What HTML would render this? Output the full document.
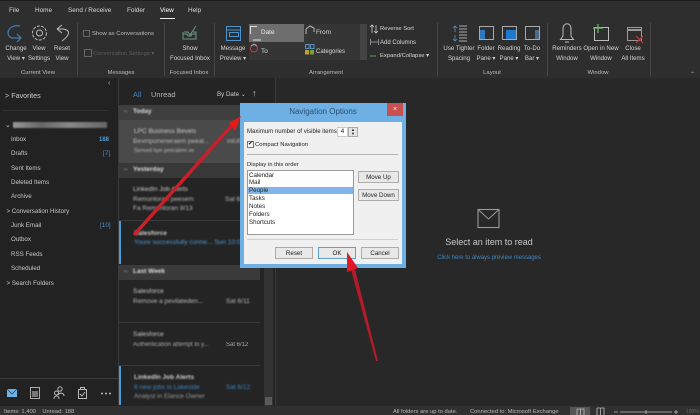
<!DOCTYPE html>
<html><head><meta charset="utf-8">
<style>
html,body{margin:0;padding:0;background:#282828}
#p{position:relative;width:700px;height:415px;overflow:hidden;background:#282828;font-family:"Liberation Sans",sans-serif;color:#d8d8d8;filter:blur(.3px)}
#p div{position:absolute}
.t{white-space:nowrap;font-size:6.4px;line-height:8px}
.c{text-align:center;transform:translateX(-50%)}
.m{font-size:6.1px;line-height:10px;white-space:nowrap;text-align:center;transform:translateX(-50%);color:#d4d4d4}
.g{font-size:5.9px;color:#bdbdbd;white-space:nowrap;transform:translateX(-50%);line-height:8px}
.s{background:#454545;width:1px;top:23px;height:53px}
.n{font-size:6.2px;line-height:8px;color:#c8c8c8;white-space:nowrap;left:11px}
.b{filter:blur(.9px);white-space:nowrap;font-size:6.5px;line-height:8px;color:#bbb}
.db{background:#e8e8e8;border:1px solid #adadad;box-sizing:border-box;text-align:center;color:#222;font-size:6.2px;line-height:11px}
</style></head><body><div id="p">
<div style="left:0;top:0;width:700px;height:1px;background:#1c1c1c"></div>
<div style="left:0;top:1px;width:700px;height:77px;background:#2e2e2e"></div>
<div style="left:0;top:78px;width:118px;height:328px;background:#222"></div>
<div style="left:118px;top:78px;width:157px;height:328px;background:#242424"></div>
<div style="left:0;top:406px;width:700px;height:9px;background:#303030"></div>

<div class="t" style="left:9px;top:7px">File</div>
<div class="t" style="left:35px;top:7px">Home</div>
<div class="t" style="left:68px;top:7px">Send / Receive</div>
<div class="t" style="left:127px;top:7px">Folder</div>
<div class="t" style="left:160px;top:7px;color:#fff">View</div>
<div style="left:160px;top:18px;width:15px;height:1px;background:#eee"></div>
<div class="t" style="left:188px;top:7px">Help</div>

<div style="left:249px;top:24px;width:55px;height:18px;background:#6e6e6e"></div>
<div style="left:249px;top:42px;width:111px;height:18px;background:#353535"></div>
<div style="left:304px;top:24px;width:56px;height:18px;background:#353535"></div>
<div style="left:360px;top:24px;width:7px;height:36px;background:#444"></div>

<svg style="position:absolute;left:0;top:20px" width="700" height="40" fill="none">
<path d="M21 6 C8 4 6 16 13 18 L21 18 M18 14 L22 18 L18 22" stroke="#3f7fb5" stroke-width="1.2" transform="translate(-1,0)"/>
<circle cx="39.500" cy="13" r="3" stroke="#bbb"/><circle cx="39.500" cy="13" r="7" stroke="#bbb" stroke-dasharray="3 1.300"/>
<path d="M57 9 L62 5 M57 9 L62 13 M57 9 L63 9 C71 10 70 15 62 21" stroke="#bbb"/>
<rect x="83.500" y="10.500" width="6" height="6" stroke="#666"/>
<path d="M184 12 L188 12 L190 15 L196 6 M193 12 L196 12 L196 19 L183 19 L183 12 M183 14 L187 14 L188 16 L191 16 L192 14 L196 14" stroke="#6a9a80"/>
<rect x="226.500" y="6.500" width="14" height="14" stroke="#4b93c8"/><rect x="229.500" y="12.500" width="9" height="4" stroke="#4b93c8"/><path d="M227 10H240" stroke="#4b93c8"/>
<path d="M250.500 14V6.500H257M253 20H261" stroke="#e0e0e0"/><circle cx="254" cy="28.500" r="3.500" stroke="#c04040"/><path d="M251 26L254 24L257 26" stroke="#aaa"/>
<path d="M306 9 L310 6 L314 8 V12 M306 9 V14" stroke="#bbb"/><rect x="305.500" y="24.500" width="3.500" height="4" stroke="#5a8fc0"/><rect x="310.500" y="24.500" width="3.500" height="4" stroke="#5a8fc0"/><rect x="305" y="30" width="4" height="4.500" fill="#c0a030"/><rect x="310" y="30" width="4" height="4.500" fill="#7aa030"/>
<path d="M372 5V13M370 7L372 5L374 7M376 5V13M374 11L376 13L378 11" stroke="#ccc" stroke-width=".8"/>
<path d="M370.500 19V25M378.500 19V25M371 22H378" stroke="#889"/>
<path d="M370 36H376" stroke="#5aa05a"/>
<path d="M455 6V12M453 8L455 6L457 8M455 15V21M453 19L455 21L457 19" stroke="#4b93c8" stroke-width=".8"/>
<path d="M459 6H467M459 9H467M459 12H467M459 15H467M459 18H467M459 21H467" stroke="#aaa"/>
<rect x="479.500" y="6.500" width="14" height="13" stroke="#aaa"/><rect x="480" y="10" width="5" height="9" fill="#2e78c0"/>
<rect x="502.500" y="6.500" width="14" height="13" stroke="#aaa"/><rect x="506" y="10" width="10" height="9" fill="#1e78d0"/>
<rect x="525.500" y="6.500" width="14" height="13" stroke="#aaa"/><rect x="535" y="10" width="4" height="9" fill="#4a6a8a"/>
<path d="M560.500 19.500 H573.500 L571 16 V9 C571 2 563 2 563 9 V16 Z M565 22 H569" stroke="#bbb"/>
<rect x="594.500" y="7.500" width="14" height="13" stroke="#bbb"/><path d="M598 4V13M593 8H603" stroke="#6abf6a" stroke-width="1.2"/>
<rect x="627.500" y="7.500" width="14" height="13" stroke="#999"/><path d="M628 10H641" stroke="#999" stroke-width="2"/><path d="M636 16L643 23M643 16L636 23" stroke="#b04040" stroke-width="1.2"/>
</svg>

<div class="m" style="left:16px;top:44px">Change<br>View ▾</div>
<div class="m" style="left:39px;top:44px">View<br>Settings</div>
<div class="m" style="left:62px;top:44px">Reset<br>View</div>
<div class="g" style="left:38px;top:69px">Current View</div>
<div class="s" style="left:77px"></div>
<div class="t" style="left:92px;top:30px;color:#bbb;font-size:5.9px">Show as Conversations</div>
<div class="t" style="left:93px;top:50px;color:#5c5c5c;font-size:5.800px">Conversation Settings ▾</div>
<div style="left:84px;top:49px;width:6px;height:6px;border:1px solid #666"></div>
<div class="g" style="left:121px;top:69px">Messages</div>
<div class="s" style="left:164px"></div>
<div class="m" style="left:190px;top:44px">Show<br>Focused Inbox</div>
<div class="g" style="left:189px;top:69px">Focused Inbox</div>
<div class="s" style="left:214px"></div>
<div class="m" style="left:233px;top:44px">Message<br>Preview ▾</div>
<div class="t" style="left:261px;top:29px;color:#eee">Date</div>
<div class="t" style="left:261px;top:48px">To</div>
<div class="t" style="left:316px;top:29px">From</div>
<div class="t" style="left:316px;top:48px;font-size:6px">Categories</div>
<div class="t" style="left:380px;top:25px;font-size:5.800px">Reverse Sort</div>
<div class="t" style="left:380px;top:39px;font-size:6px">Add Columns</div>
<div class="t" style="left:380px;top:52px;font-size:5.900px">Expand/Collapse ▾</div>
<div class="g" style="left:326px;top:69px">Arrangement</div>
<div class="s" style="left:437px"></div>
<div class="m" style="left:459px;top:44px">Use Tighter<br>Spacing</div>
<div class="m" style="left:486px;top:44px">Folder<br>Pane ▾</div>
<div class="m" style="left:509px;top:44px">Reading<br>Pane ▾</div>
<div class="m" style="left:532px;top:44px">To-Do<br>Bar ▾</div>
<div class="g" style="left:492px;top:69px">Layout</div>
<div class="s" style="left:547px"></div>
<div class="m" style="left:567px;top:44px">Reminders<br>Window</div>
<div class="m" style="left:601px;top:44px">Open in New<br>Window</div>
<div class="m" style="left:633px;top:44px">Close<br>All Items</div>
<div class="g" style="left:598px;top:69px">Window</div>
<div class="s" style="left:650px"></div>
<div class="t" style="left:690px;top:71px;color:#aaa;font-size:6px">⌃</div>

<!-- nav -->
<div class="t" style="left:108px;top:80px;color:#bbb;font-size:7px">‹</div>
<div class="t" style="left:5px;top:92px;font-size:7.200px;color:#ccc">&gt; Favorites</div>
<div style="left:3px;top:110px;width:105px;height:1px;background:#333"></div>
<div class="n" style="left:5px;top:122px;font-size:7px">⌄</div>
<div class="b" style="left:13px;top:122px;width:94px;height:6px;background:linear-gradient(90deg,#999,#666 30%,#888 60%,#666);font-size:0"></div>
<div class="n" style="top:136px">Inbox</div><div class="t" style="left:99px;top:136px;color:#4f9bd8;font-weight:bold;font-size:6px">188</div>
<div class="n" style="top:150px">Drafts</div><div class="t" style="left:103px;top:150px;color:#4f8fc8">[7]</div>
<div class="n" style="top:165px">Sent Items</div>
<div class="n" style="top:179px">Deleted Items</div>
<div class="n" style="top:193px">Archive</div>
<div class="n" style="top:208px;left:6.500px">&gt; Conversation History</div>
<div class="n" style="top:222px">Junk Email</div><div class="t" style="left:100px;top:222px;color:#4f8fc8">[10]</div>
<div class="n" style="top:236px">Outbox</div>
<div class="n" style="top:251px">RSS Feeds</div>
<div class="n" style="top:265px">Scheduled</div>
<div class="n" style="top:280px;left:6.500px">&gt; Search Folders</div>
<div style="left:0;top:378px;width:118px;height:1px;background:#3a3a3a"></div>
<svg style="position:absolute;left:0;top:384px" width="118" height="20" fill="none">
<rect x="7" y="5" width="10" height="8" fill="#6db3e6"/><path d="M7 5L12 10L17 5" stroke="#1f4f78" stroke-width=".8"/>
<rect x="30.500" y="3.500" width="9" height="11" stroke="#aaa"/><rect x="32" y="7" width="6" height="6" fill="#777"/>
<circle cx="60" cy="5" r="2.200" stroke="#bbb"/><circle cx="56.500" cy="9" r="2" stroke="#bbb"/><path d="M54 15C54 11 59 11 59 15M58 11C60 8 64 9 64 12" stroke="#bbb"/>
<rect x="78.500" y="5.500" width="8" height="9" stroke="#bbb"/><rect x="80.500" y="3.500" width="4" height="2" stroke="#bbb"/><path d="M80 10L82 12L85 8" stroke="#bbb"/>
<circle cx="102" cy="9.500" r="1" fill="#bbb"/><circle cx="106" cy="9.500" r="1" fill="#bbb"/><circle cx="110" cy="9.500" r="1" fill="#bbb"/>
</svg>
<div class="t" style="left:4px;top:409px;color:#bbb;font-size:5.800px;line-height:7px">Items: 1,400 &nbsp;&nbsp; Unread: 188</div>

<!-- list -->
<div style="left:118px;top:78px;width:1px;height:328px;background:#3a3a3a"></div>
<div style="left:275px;top:78px;width:1px;height:328px;background:#3a3a3a"></div>
<div style="left:264px;top:104px;width:9px;height:302px;background:#333"></div>
<div style="left:265px;top:397px;width:7px;height:8px;background:#5a5a5a"></div>
<div class="t" style="left:133px;top:91px;font-size:7.500px;color:#3f86c4">All</div>
<div class="t" style="left:151px;top:91px;font-size:7.500px;color:#b5b5b5">Unread</div>
<div class="t" style="left:217px;top:91px;font-size:6.200px;color:#ccc">By Date ⌄</div>
<div class="t" style="left:252px;top:89px;font-size:9px;color:#ccc">↑</div>
<div style="left:119px;top:105px;width:141px;height:58px;background:#4a4a4a"></div>
<div style="left:119px;top:105px;width:141px;height:15px;background:#3f3f3f"></div>
<div style="left:119px;top:163px;width:121px;height:15px;background:#383838"></div>
<div style="left:119px;top:265px;width:141px;height:15px;background:#3a3a3a"></div>
<div style="left:119px;top:221px;width:2px;height:43px;background:#4f9bd8"></div>
<div style="left:119px;top:366px;width:2px;height:39px;background:#4f9bd8"></div>
<div style="left:119px;top:220px;width:141px;height:1px;background:#3a3a3a"></div>
<div style="left:119px;top:322px;width:141px;height:1px;background:#3a3a3a"></div>
<div style="left:119px;top:365px;width:141px;height:1px;background:#3a3a3a"></div>
<div class="b" style="left:124px;top:108px;color:#bbb">–</div>
<div class="b" style="left:124px;top:166px;color:#bbb">–</div>
<div class="b" style="left:124px;top:268px;color:#bbb">–</div>
<div class="b" style="left:133px;top:108px;color:#ddd;font-weight:bold">Today</div>
<div class="b" style="left:134px;top:128px;color:#ccc">LPC Business Bevels</div>
<div class="b" style="left:133px;top:138px">Bevmponeneraem peeal...</div>
<div class="b" style="left:134px;top:147px;font-size:5.500px">Senveil bye peeralem ve</div>
<div class="b" style="left:227px;top:138px">iniU0</div>
<div class="b" style="left:133px;top:166px;color:#ddd;font-weight:bold">Yesterday</div>
<div class="b" style="left:133px;top:186px;color:#ccc">LinkedIn Job Alerts</div>
<div class="b" style="left:133px;top:196px">Remontoran peesem</div>
<div class="b" style="left:225px;top:196px">Sat 6/11</div>
<div class="b" style="left:133px;top:205px">Fa Remontoran 8/13</div>
<div class="b" style="left:134px;top:230px;color:#ccc;font-weight:bold">Salesforce</div>
<div class="b" style="left:134px;top:239px;color:#4f9bd8">Youre successfully conne... Sun 10:02</div>
<div class="b" style="left:133px;top:268px;color:#ddd;font-weight:bold">Last Week</div>
<div class="b" style="left:133px;top:288px;color:#ccc">Salesforce</div>
<div class="b" style="left:133px;top:298px">Remove a pevilateden...</div>
<div class="b" style="left:226px;top:298px">Sat 6/11</div>
<div class="b" style="left:133px;top:331px;color:#ccc">Salesforce</div>
<div class="t" style="left:133px;top:341px;color:#aaa;filter:blur(.4px);font-size:6px">Authentication attempt to y...</div>
<div class="t" style="left:226px;top:341px;color:#aaa;filter:blur(.3px);font-size:6px">Sat 6/12</div>
<div class="b" style="left:134px;top:374px;color:#ccc;font-weight:bold">LinkedIn Job Alerts</div>
<div class="b" style="left:134px;top:384px;color:#3f86c4">8 new jobs in Lakeside</div>
<div class="b" style="left:226px;top:384px;color:#3f86c4">Sat 6/12</div>
<div class="b" style="left:134px;top:393px;color:#999">Analyst in Elance Owner</div>

<!-- reading -->
<svg style="position:absolute;left:477px;top:208px" width="24" height="21" fill="none"><rect x="1" y="1.500" width="21" height="18" stroke="#999" stroke-width="1.100"/><path d="M1 1.500L11.500 11L22 1.500" stroke="#999"/></svg>
<div class="t c" style="left:489px;top:236px;font-size:9px;line-height:12px;color:#c8c8c8">Select an item to read</div>
<div class="t c" style="left:489px;top:254px;font-size:5.950px;color:#3f86c4">Click here to always preview messages</div>

<!-- status -->
<div class="t" style="left:393px;top:409px;color:#bbb;font-size:5.800px;line-height:7px">All folders are up to date.</div>
<div class="t" style="left:470px;top:409px;color:#bbb;font-size:5.800px;line-height:7px">Connected to: Microsoft Exchange</div>
<div style="left:570px;top:407px;width:20px;height:8px;background:#555"></div>
<svg style="position:absolute;left:570px;top:407px" width="130" height="8" fill="none"><path d="M7 2H14V8M7 2V8M10.500 2V8M27 1H34V8M27 1V8M30.500 1V8" stroke="#bbb" stroke-width=".8"/><path d="M44 5H48M50 5H102M76 3V7M104 5H108M106 3V7" stroke="#bbb" stroke-width=".8"/></svg>
<div class="t" style="left:686px;top:409px;color:#666;font-size:5px;line-height:7px">100%</div>

<!-- dialog -->
<div style="left:240px;top:103px;width:166px;height:165px;background:#6fb0e4"></div>
<div style="left:244px;top:122px;width:158px;height:142px;background:#f0f0f0"></div>
<div class="t c" style="left:323px;top:107px;font-size:8px;line-height:10px;color:#2a4f74">Navigation Options</div>
<div style="left:387px;top:103px;width:16px;height:13px;background:#c85050;color:#fff;font-size:7px;line-height:13px;text-align:center">×</div>
<div class="t" style="left:247px;top:128px;color:#222;font-size:6.050px">Maximum number of visible items:</div>
<div style="left:337px;top:127px;width:11px;height:10px;background:#fff;border:1px solid #ccc;box-sizing:border-box;color:#222;font-size:6.200px;line-height:8px;text-align:center">4</div>
<div style="left:348px;top:127px;width:10px;height:10px;background:#e4e4e4;border:1px solid #aaa;box-sizing:border-box;color:#222;font-size:4px;line-height:4px;text-align:center">▲<br>▼</div>
<div style="left:247px;top:141px;width:7px;height:7px;box-sizing:border-box;background:#fff;border:1px solid #777;color:#111;font-size:6px;line-height:5px;text-align:center">✔</div>
<div class="t" style="left:255px;top:141px;color:#222;font-size:5.900px">Compact Navigation</div>
<div style="left:247px;top:154px;width:151px;height:1px;background:#b5b5b5"></div>
<div class="t" style="left:247px;top:161px;color:#222;font-size:5.900px">Display in this order</div>
<div style="left:247px;top:170px;width:107px;height:65px;background:#fff;border:1px solid #9a9a9a;box-sizing:border-box"></div>
<div style="left:248px;top:187px;width:105px;height:7px;background:#7fb5e8"></div>
<div class="t" style="left:249px;top:171.500px;color:#222;font-size:6.200px;line-height:7.900px;white-space:pre">Calendar
Mail
People
Tasks
Notes
Folders
Shortcuts</div>
<div class="db" style="left:358px;top:171px;width:41px;height:12px">Move Up</div>
<div class="db" style="left:358px;top:189px;width:41px;height:12px">Move Down</div>
<div style="left:247px;top:239px;width:151px;height:1px;background:#cfcfcf"></div>
<div class="db" style="left:275px;top:247px;width:38px;height:12px">Reset</div>
<div class="db" style="left:318px;top:247px;width:38px;height:12px;border-color:#5f9fd0">OK</div>
<div class="db" style="left:361px;top:247px;width:38px;height:12px">Cancel</div>

<!-- arrows -->
<svg style="position:absolute;left:0;top:0" width="700" height="415" fill="none">
<path d="M134 235 L233 124" stroke="#c8202a" stroke-width="3.500"/>
<path d="M241 116 L229 123 L235 131 Z" fill="#e41a1a"/>
<path d="M350.500 268 L354.500 267 L378 361 L376 361 Z" fill="#b01c28"/>
<path d="M347 252 L347 272 L358 268 Z" fill="#e01a24"/>
</svg>
</div></body></html>
